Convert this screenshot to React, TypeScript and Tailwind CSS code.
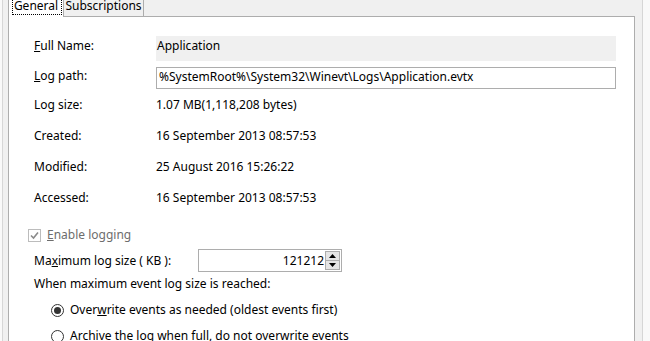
import React from "react";

const FONT = { fontFamily: '"Noto Sans", "Segoe UI", sans-serif' };

const InfoRow = ({ label, value }: { label: React.ReactNode; value: string }) => (
  <div className="flex h-[31px] items-center">
    <span className="w-[122px] shrink-0">{label}</span>
    <span>{value}</span>
  </div>
);

const Radio = ({ checked, children }: { checked?: boolean; children: React.ReactNode }) => (
  <div className="flex items-center gap-[6px] pl-[17px]">
    <span className="flex h-[13px] w-[13px] items-center justify-center rounded-full border border-[#333] bg-white">
      {checked && <span className="h-[7px] w-[7px] rounded-full bg-[#333]" />}
    </span>
    <span>{children}</span>
  </div>
);

export default function App() {
  return (
    <div
      className="flex h-[341px] w-[650px] overflow-hidden bg-[#f0f0f0] text-[12px] leading-[16px] text-black"
      style={FONT}
    >
      {/* left window edge */}
      <div className="w-[2px] bg-[#f9f9f9]" />
      <div className="w-px bg-[#d6d6d6]" />
      <div className="w-[5px]" />

      {/* tab control */}
      <div className="flex w-[627px] flex-col">
        <div className="flex h-[17px] shrink-0">
          <div className="relative flex w-[56px] items-start justify-center border-x border-[#adadad] bg-white">
            <span className="absolute left-[3px] right-[1px] top-[-2px] h-[17px] border border-dotted border-black" />
            <span className="leading-[12px]">General</span>
          </div>
          <div className="flex w-[80px] items-start justify-center border-r border-b border-[#adadad] bg-[#f0f0f0]">
            <span className="leading-[12px]">Subscriptions</span>
          </div>
          <div className="flex-1 border-b border-[#adadad]" />
        </div>

        <div className="flex-1 border-x border-[#adadad] bg-white pl-[25px] pr-[18px] pt-[19px]">
          <div className="flex items-start">
            <span className="w-[122px] shrink-0 pt-[2px]">
              <u>F</u>ull Name:
            </span>
            <div className="h-[25px] flex-1 bg-[#f0f0f0] pl-px pt-[2px]">Application</div>
          </div>

          <div className="mt-[6px] flex items-start">
            <span className="w-[122px] shrink-0 pt-px">
              <u>L</u>og path:
            </span>
            <div className="h-[22px] flex-1 border border-[#adadad] bg-white pl-[2px] pt-px">
              %SystemRoot%\System32\Winevt\Logs\Application.evtx
            </div>
          </div>

          <InfoRow label="Log size:" value="1.07 MB(1,118,208 bytes)" />
          <InfoRow label="Created:" value="16 September 2013 08:57:53" />
          <InfoRow label="Modified:" value="25 August 2016 15:26:22" />
          <InfoRow label="Accessed:" value="16 September 2013 08:57:53" />

          <div className="ml-[-6px] mt-[14px] flex items-center gap-[6px] text-[#6d6d6d]">
            <span className="flex h-[13px] w-[13px] items-center justify-center border border-[#bcbcbc] bg-white">
              <svg width="9" height="9" viewBox="0 0 9 9">
                <path d="M1 4.5 L3.5 7 L8 1.5" fill="none" stroke="#8a8a8a" strokeWidth="1.6" />
              </svg>
            </span>
            <span>
              <u>E</u>nable logging
            </span>
          </div>

          <div className="mt-[6px] flex items-center">
            <span className="w-[164px] shrink-0">
              Ma<u>x</u>imum log size ( KB ):
            </span>
            <div className="flex h-[23px] w-[144px] items-center border border-[#adadad] bg-white">
              <span className="flex-1 pr-px text-right">121212</span>
              <div className="mr-px flex h-[19px] w-[15px] flex-col">
                <div className="flex flex-1 items-center justify-center border border-[#adadad] bg-[#e5e5e5]">
                  <svg width="7" height="4" viewBox="0 0 7 4">
                    <path d="M0 4 L3.5 0 L7 4 Z" fill="#000" />
                  </svg>
                </div>
                <div className="flex flex-1 items-center justify-center border border-t-0 border-[#adadad] bg-[#e5e5e5]">
                  <svg width="7" height="4" viewBox="0 0 7 4">
                    <path d="M0 0 L7 0 L3.5 4 Z" fill="#000" />
                  </svg>
                </div>
              </div>
            </div>
          </div>

          <div className="mt-[4px]">When maximum event log size is reached:</div>

          <div className="mt-[10px] flex flex-col gap-[10px]">
            <Radio checked>
              Over<u>w</u>rite events as needed (oldest events first)
            </Radio>
            <Radio>
              <u>A</u>rchive the log when full, do not overwrite events
            </Radio>
          </div>
        </div>
      </div>

      {/* right window edge */}
      <div className="w-[7px]" />
      <div className="w-px bg-[#d6d6d6]" />
      <div className="flex-1 bg-[#f9f9f9]" />
    </div>
  );
}
